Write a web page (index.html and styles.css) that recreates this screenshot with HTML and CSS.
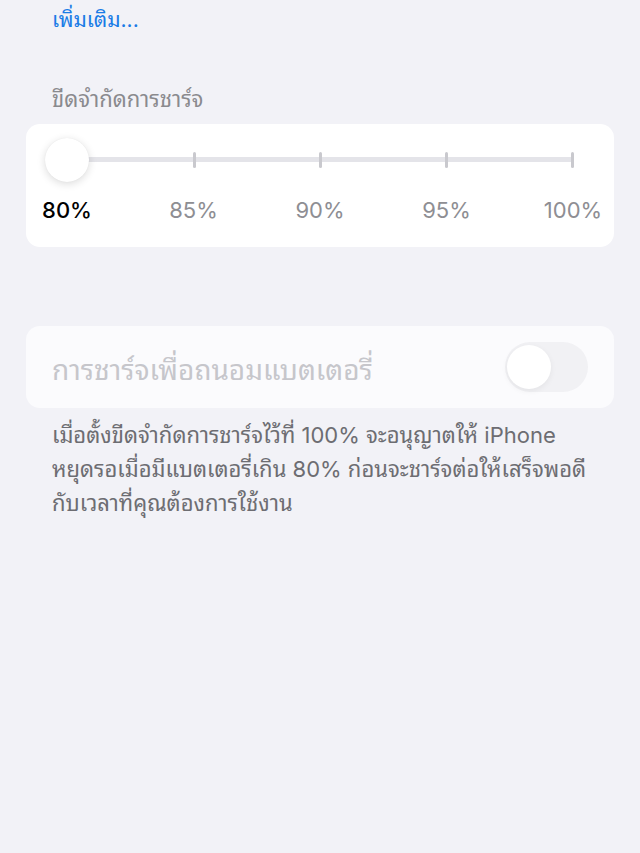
FILE: index.html
```html
<!DOCTYPE html>
<html lang="th">
<head>
  <meta charset="UTF-8" />
  <meta name="viewport" content="width=device-width, initial-scale=1.0" />
  <title>ขีดจำกัดการชาร์จ</title>
  <link rel="stylesheet" href="styles.css">
</head>
<body>

  <a class="more" href="#">เพิ่มเติม...</a>

  <div class="section-title">ขีดจำกัดการชาร์จ</div>

  <!-- ตัวเลือกขีดจำกัด -->
  <div class="card slider-card">
    <div class="track">
      <span class="tick hidden"></span>
      <span class="tick"></span>
      <span class="tick"></span>
      <span class="tick"></span>
      <span class="tick"></span>
      <div class="knob"></div>
    </div>
    <div class="steps">
      <span class="step active">80%</span>
      <span class="step">85%</span>
      <span class="step">90%</span>
      <span class="step">95%</span>
      <span class="step">100%</span>
    </div>
  </div>

  <!-- การชาร์จเพื่อถนอมแบตเตอรี่ (ปิดใช้งาน) -->
  <div class="card toggle-card">
    <span class="toggle-label">การชาร์จเพื่อถนอมแบตเตอรี่</span>
    <span class="switch"><span class="switch-knob"></span></span>
  </div>

  <p class="footnote">เมื่อตั้งขีดจำกัดการชาร์จไว้ที่ 100% จะอนุญาตให้ iPhone<br>หยุดรอเมื่อมีแบตเตอรี่เกิน 80% ก่อนจะชาร์จต่อให้เสร็จพอดี<br>กับเวลาที่คุณต้องการใช้งาน</p>

</body>
</html>
```

FILE: styles.css
```css
body {
  background-color: #f2f2f7;
  font-family: Inter, "Noto Sans Thai Looped", "Noto Sans", sans-serif;
  margin: 0;
  padding: 0 26px;
  min-height: 100vh;
}
.more {
  display: block;
  color: #1a7ce6;
  text-decoration: none;
  font-size: 21px;
  line-height: 40px;
  padding-left: 26px;
}
.section-title {
  margin-top: 44px;
  padding-left: 26px;
  font-size: 22px;
  line-height: 30px;
  color: #8a8a8e;
}
.card {
  background-color: #fff;
  border-radius: 14px;
  box-sizing: border-box;
}
.slider-card {
  margin-top: 10px;
  height: 123px;
  padding-top: 33px;
}
.track {
  position: relative;
  margin: 0 41px;
  height: 5px;
  background-color: #e4e4e9;
  border-radius: 3px;
  display: flex;
  justify-content: space-between;
  align-items: center;
}
.tick {
  width: 3px;
  height: 16px;
  border-radius: 2px;
  background-color: #c9c9ce;
}
.tick:last-of-type {
  margin-right: -1px;
}
.tick.hidden {
  visibility: hidden;
}
.knob {
  position: absolute;
  left: -22px;
  top: -19px;
  width: 44px;
  height: 44px;
  border-radius: 50%;
  background-color: #fff;
  box-shadow: 0 2px 8px rgba(0, 0, 0, 0.14), 0 0 1px rgba(0, 0, 0, 0.08);
}
.steps {
  margin: 34px 41px 0;
  display: flex;
  justify-content: space-between;
}
.step {
  width: 0;
  display: flex;
  justify-content: center;
  white-space: nowrap;
  font-size: 22px;
  line-height: 28px;
  color: #8e8e93;
}
.step.active {
  color: #000;
  font-weight: 500;
}
.toggle-card {
  margin-top: 79px;
  height: 82px;
  padding: 0 26px;
  display: flex;
  align-items: center;
  justify-content: space-between;
  background-color: #fbfbfd;
}
.toggle-label {
  font-size: 28px;
  color: #c6c6cb;
}
.switch {
  position: relative;
  width: 83px;
  height: 50px;
  border-radius: 25px;
  background-color: #f1f1f4;
}
.switch-knob {
  position: absolute;
  left: 2px;
  top: 3px;
  width: 44px;
  height: 44px;
  border-radius: 50%;
  background-color: #fff;
  box-shadow: 0 2px 6px rgba(0, 0, 0, 0.06);
}
.footnote {
  margin: 10px 0 0;
  padding-left: 26px;
  font-size: 22px;
  line-height: 34px;
  color: #6d6d72;
}
```
